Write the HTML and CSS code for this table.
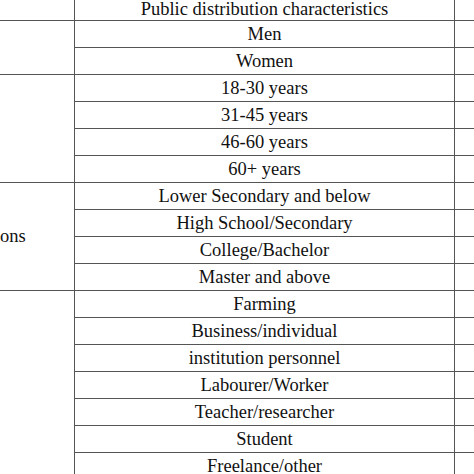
FILE: index.html
```html
<!DOCTYPE html>
<html>
<head>
<meta charset="utf-8">
<link rel="stylesheet" href="styles.css">
</head>
<body>
<div class="table">
  <div class="cell left head"></div>
  <div class="cell mid head">Public distribution characteristics</div>
  <div class="cell right head"></div>

  <div class="cell left g2"></div>
  <div class="cell mid">Men</div><div class="cell right"></div>
  <div class="cell mid">Women</div><div class="cell right"></div>

  <div class="cell left g4"></div>
  <div class="cell mid">18-30 years</div><div class="cell right"></div>
  <div class="cell mid">31-45 years</div><div class="cell right"></div>
  <div class="cell mid">46-60 years</div><div class="cell right"></div>
  <div class="cell mid">60+ years</div><div class="cell right"></div>

  <div class="cell left g4 label">ons</div>
  <div class="cell mid">Lower Secondary and below</div><div class="cell right"></div>
  <div class="cell mid">High School/Secondary</div><div class="cell right"></div>
  <div class="cell mid">College/Bachelor</div><div class="cell right"></div>
  <div class="cell mid">Master and above</div><div class="cell right"></div>

  <div class="cell left g7"></div>
  <div class="cell mid">Farming</div><div class="cell right"></div>
  <div class="cell mid">Business/individual</div><div class="cell right"></div>
  <div class="cell mid">institution personnel</div><div class="cell right"></div>
  <div class="cell mid">Labourer/Worker</div><div class="cell right"></div>
  <div class="cell mid">Teacher/researcher</div><div class="cell right"></div>
  <div class="cell mid">Student</div><div class="cell right"></div>
  <div class="cell mid">Freelance/other</div><div class="cell right"></div>
</div>
</body>
</html>
```

FILE: styles.css
```css
html, body {
  margin: 0;
  padding: 0;
  background: #fff;
  overflow: hidden;
}
body {
  width: 474px;
  height: 474px;
}
.table {
  display: grid;
  grid-template-columns: 74px 379px 40px;
  grid-template-rows: 20px repeat(17, 26px);
  gap: 1px;
  background: #555;
  font-family: "Liberation Serif", "Times New Roman", serif;
  font-size: 18.5px;
  color: #111;
}
.cell {
  background: #fff;
  display: flex;
  align-items: center;
  justify-content: center;
  white-space: nowrap;
  overflow: hidden;
}
.left {
  grid-column: 1;
}
.mid {
  grid-column: 2;
}
.right {
  grid-column: 3;
}
.head {
  grid-row: 1;
  align-items: flex-start;
  line-height: 18px;
}
.g2 { grid-row: span 2; }
.g4 { grid-row: span 4; }
.g7 { grid-row: span 7; }
.label {
  justify-content: flex-start;
  padding-left: 0;
}
```
